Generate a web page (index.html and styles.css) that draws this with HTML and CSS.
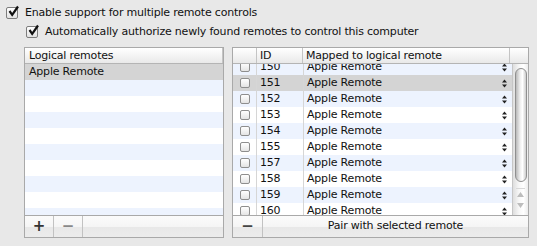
FILE: index.html
```html
<!DOCTYPE html>
<html lang="en">
<head>
    <meta charset="UTF-8">
    <title>Remote controls</title>
    <link rel="stylesheet" href="styles.css">
</head>
<body>
    <div class="prefs">
        <label class="opt">
            <span class="check"><svg width="13" height="13" viewBox="0 0 13 13"><path d="M2.5 6 L5.2 9.8 L11 1.5" fill="none" stroke="#111" stroke-width="2.2"/></svg></span>
            Enable support for multiple remote controls
        </label>
        <label class="opt sub">
            <span class="check"><svg width="13" height="13" viewBox="0 0 13 13"><path d="M2.5 6 L5.2 9.8 L11 1.5" fill="none" stroke="#111" stroke-width="2.2"/></svg></span>
            Automatically authorize newly found remotes to control this computer
        </label>

        <div class="tables">
            <div class="panel logical">
                <div class="head">
                    <div class="col">Logical remotes</div>
                </div>
                <div class="body">
                    <div class="row sel">Apple Remote</div>
                    <div class="row alt"></div>
                    <div class="row"></div>
                    <div class="row alt"></div>
                    <div class="row"></div>
                    <div class="row alt"></div>
                    <div class="row"></div>
                    <div class="row alt"></div>
                    <div class="row"></div>
                    <div class="row alt"></div>
                </div>
                <div class="bar">
                    <span class="btn">+</span>
                    <span class="btn">&minus;</span>
                    <span class="fill"></span>
                </div>
            </div>

            <div class="panel mapping">
                <div class="head">
                    <div class="col c-check"></div>
                    <div class="col c-id">ID</div>
                    <div class="col c-map">Mapped to logical remote</div>
                    <div class="col c-corner"></div>
                </div>
                <div class="main">
                    <div class="body">
                        <div class="rows" id="rows"></div>
                    </div>
                    <div class="scroll">
                        <div class="thumb"></div>
                        <div class="arrows">
                            <svg width="9" height="22" viewBox="0 0 9 22"><path d="M1 8 L4.5 3 L8 8 Z M1 14 L8 14 L4.5 19 Z" fill="#bdbdbd"/></svg>
                        </div>
                    </div>
                </div>
                <div class="bar">
                    <span class="btn">&minus;</span>
                    <span class="fill pair">Pair with selected remote</span>
                </div>
            </div>
        </div>
    </div>

    <script>
        // Mapping rows
        const ids = [150, 151, 152, 153, 154, 155, 157, 158, 159, 160];
        const rows = document.getElementById('rows');
        ids.forEach((id, i) => {
            const row = document.createElement('div');
            row.className = 'row' + (id === 151 ? ' sel' : (i % 2 === 0 ? ' alt' : ''));
            row.innerHTML =
                '<span class="cell c-check"><span class="box"></span></span>' +
                '<span class="cell c-id">' + id + '</span>' +
                '<span class="cell c-map">Apple Remote' +
                '<svg class="updown" width="5" height="9" viewBox="0 0 5 9"><path d="M0 3.5 L2.5 0.5 L5 3.5 Z M0 5.5 L5 5.5 L2.5 8.5 Z" fill="#222"/></svg>' +
                '</span>';
            rows.appendChild(row);
        });
    </script>
</body>
</html>
```

FILE: styles.css
```css
body {
    margin: 0;
    background: #e8e8e8;
    font-family: "DejaVu Sans", sans-serif;
    font-size: 11px;
    letter-spacing: -0.2px;
    color: #111;
}
.prefs {
    width: 537px;
    height: 246px;
    padding-top: 5px;
    box-sizing: border-box;
}
.opt {
    display: flex;
    align-items: center;
    height: 15px;
    padding-left: 6px;
    margin-bottom: 4px;
}
.opt.sub {
    padding-left: 26px;
}
.check {
    width: 10px;
    height: 10px;
    border: 1px solid #7d7d7d;
    border-radius: 2px;
    background: linear-gradient(#ffffff, #e2e2e2);
    margin-right: 7px;
    position: relative;
}
.check svg {
    position: absolute;
    left: -0.5px;
    top: -3px;
}
.tables {
    display: flex;
    gap: 8px;
    padding-left: 24px;
    margin-top: 8px;
}
.panel {
    border: 1px solid #a9a9a9;
    background: #fff;
    height: 189px;
    display: flex;
    flex-direction: column;
}
.logical { width: 198px; }
.mapping { width: 295px; }

.head {
    display: flex;
    height: 15px;
    border-bottom: 1px solid #b4b4b4;
    background: linear-gradient(#ffffff, #f4f4f4 50%, #e9e9e9);
}
.head .col {
    line-height: 15px;
    padding-left: 4px;
    border-right: 1px solid #c4c4c4;
}
.logical .head .col { flex: 1; }
.head .c-check { width: 19px; }
.head .c-id { width: 42px; padding-left: 3px; }
.head .c-map { width: 203px; padding-left: 3px; }
.head .c-corner { flex: 1; border-right: none; }

.body {
    flex: 1;
    overflow: hidden;
}
.row {
    height: 16px;
    line-height: 16px;
    padding-left: 4px;
}
.row.alt { background: #edf3fe; }
.row.sel { background: #d4d4d4; }

.main {
    flex: 1;
    display: flex;
    overflow: hidden;
}
.main .body { width: 279px; }
.rows { margin-top: -5px; }
.mapping .row {
    display: flex;
    padding-left: 0;
}
.cell {
    height: 16px;
    border-right: 1px solid #d6d6d6;
}
.cell.c-check {
    width: 23px;
    display: flex;
    align-items: center;
    justify-content: center;
}
.cell.c-id { width: 43px; padding-left: 3px; }
.cell.c-map {
    flex: 1;
    padding-left: 3px;
    border-right: none;
    display: flex;
    align-items: center;
}
.box {
    width: 8px;
    height: 8px;
    border: 1px solid #8e8e8e;
    border-radius: 2px;
    background: linear-gradient(#ffffff, #e4e4e4);
}
.updown {
    margin-left: auto;
    margin-right: 5px;
}

.scroll {
    width: 15px;
    border-left: 1px solid #c6c6c6;
    background: linear-gradient(90deg, #dedede, #f7f7f7 40%, #ffffff 70%, #ececec);
    display: flex;
    flex-direction: column;
    align-items: center;
}
.thumb {
    width: 10px;
    height: 112px;
    margin-top: 4px;
    border: 1px solid #8f8f8f;
    border-radius: 6px;
    background: linear-gradient(90deg, #b9b9b9, #eeeeee 40%, #ffffff 65%, #cccccc);
}
.arrows {
    margin-top: 6px;
    border-top: 1px solid #d8d8d8;
}

.bar {
    display: flex;
    height: 21px;
    border-top: 1px solid #a9a9a9;
    background: linear-gradient(#fbfbfb, #f5f5f5 50%, #e8e8e8 52%, #ececec);
}
.btn {
    width: 28px;
    border-right: 1px solid #c2c2c2;
    text-align: center;
    line-height: 21px;
    font-size: 15px;
    font-weight: bold;
    color: #333;
}
.btn + .btn { color: #888; }
.mapping .btn { color: #444; width: 29px; }
.fill { flex: 1; }
.pair {
    text-align: center;
    line-height: 20px;
}
```
